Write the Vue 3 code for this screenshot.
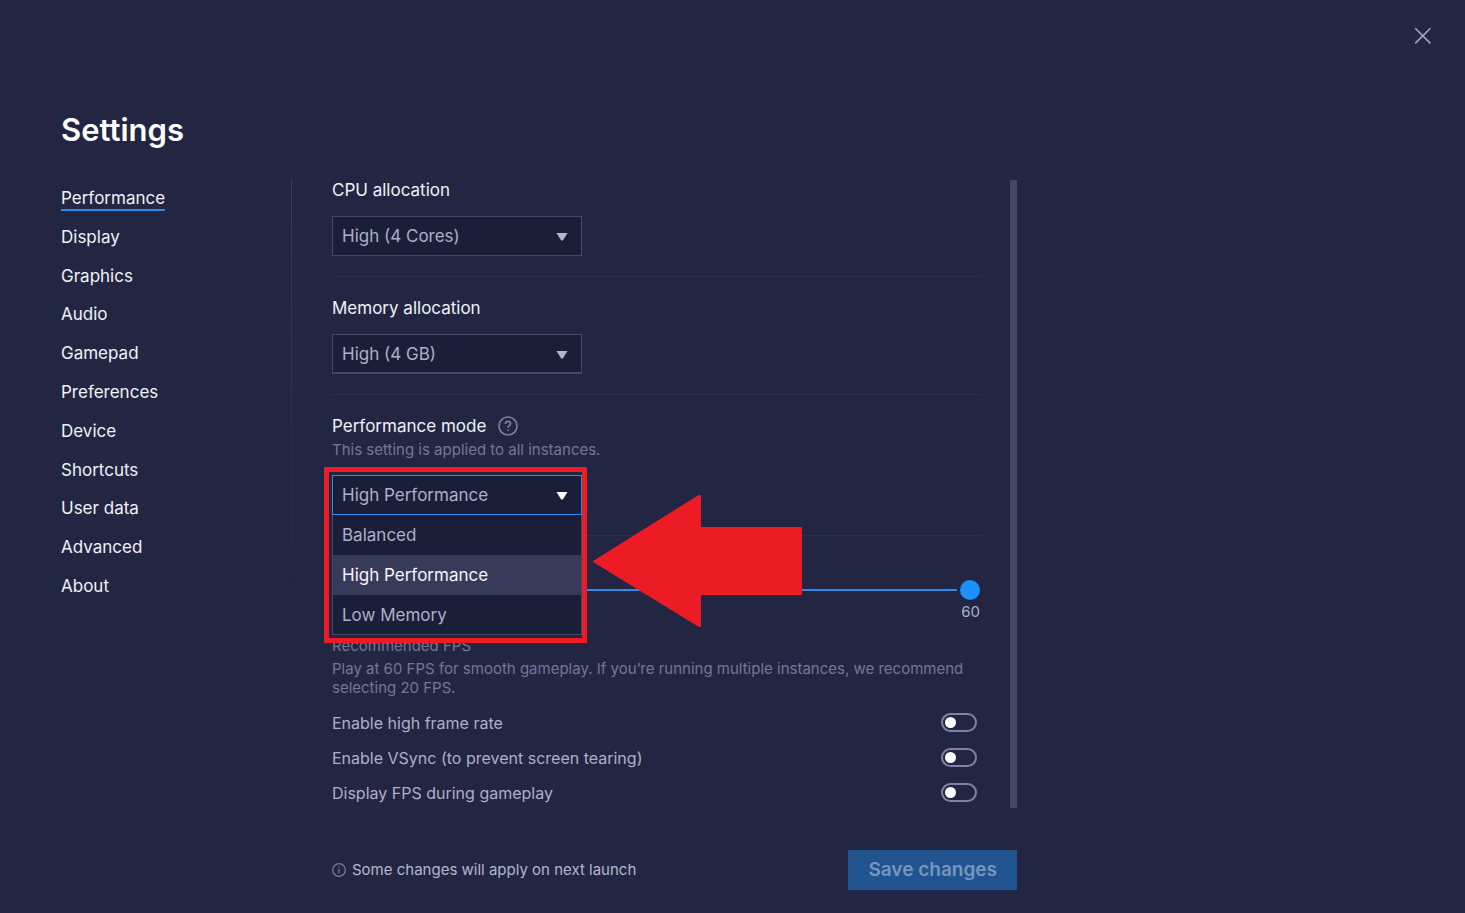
<script setup>
import { ref } from 'vue'

const navItems = [
  'Performance', 'Display', 'Graphics', 'Audio', 'Gamepad', 'Preferences',
  'Device', 'Shortcuts', 'User data', 'Advanced', 'About'
]
const activeNav = ref('Performance')

const cpu = ref('High (4 Cores)')
const memory = ref('High (4 GB)')
const modes = ['Balanced', 'High Performance', 'Low Memory']
const mode = ref('High Performance')
const fps = ref(60)

const toggles = ref([
  { id: 'high-frame-rate', label: 'Enable high frame rate', on: false },
  { id: 'vsync', label: 'Enable VSync (to prevent screen tearing)', on: false },
  { id: 'display-fps', label: 'Display FPS during gameplay', on: false }
])
</script>

<template>
  <div class="window">
    <button class="close" type="button" aria-label="Close">
      <svg width="18" height="18" viewBox="0 0 18 18">
        <path d="M1.2 1.2 16.4 16.4M16.4 1.2 1.2 16.4" />
      </svg>
    </button>

    <h1>Settings</h1>

    <div class="layout">
      <nav class="sidebar">
        <ul>
          <li v-for="item in navItems" :key="item">
            <a href="#" :class="{ active: item === activeNav }" @click.prevent="activeNav = item">{{ item }}</a>
          </li>
        </ul>
      </nav>

      <main class="main">
        <div class="scroller">
          <div class="content">
            <section>
              <label class="heading" for="cpu">CPU allocation</label>
              <div class="dropdown">
                <select id="cpu" v-model="cpu">
                  <option>High (4 Cores)</option>
                </select>
                <svg class="caret" width="12" height="8" viewBox="0 0 12 8"><path d="M.5 0H11.5L6.8 7.6H5.2Z" /></svg>
              </div>
            </section>

            <section>
              <label class="heading" for="memory">Memory allocation</label>
              <div class="dropdown">
                <select id="memory" v-model="memory" class="heavy">
                  <option>High (4 GB)</option>
                </select>
                <svg class="caret" width="12" height="8" viewBox="0 0 12 8"><path d="M.5 0H11.5L6.8 7.6H5.2Z" /></svg>
              </div>
            </section>

            <section>
              <div class="heading-row">
                <label class="heading" for="mode">Performance mode</label>
                <svg class="help" width="20" height="20" viewBox="0 0 20 20">
                  <circle cx="10" cy="10" r="9" />
                  <path d="M7.4 8C7.4 6.4 8.5 5.4 10 5.4S12.6 6.4 12.6 7.8C12.6 9.7 10 9.7 10 11.7" />
                  <path d="M10 13.4V15" />
                </svg>
              </div>
              <p class="hint">This setting is applied to all instances.</p>
              <div class="dropdown open">
                <select id="mode" v-model="mode">
                  <option v-for="m in modes" :key="m">{{ m }}</option>
                </select>
                <svg class="caret" width="12" height="8" viewBox="0 0 12 8"><path d="M.5 0H11.5L6.8 7.6H5.2Z" /></svg>
                <ul class="menu" role="listbox">
                  <li
                    v-for="m in modes"
                    :key="m"
                    role="option"
                    :aria-selected="m === mode"
                    :class="{ selected: m === mode }"
                    @click="mode = m"
                  >{{ m }}</li>
                </ul>
                <div class="highlight"></div>
                <svg class="arrow" width="209" height="134" viewBox="0 0 209 134">
                  <path d="M1 67.5 106 2H107V34H208V100H107V132H106Z" />
                </svg>
              </div>
            </section>

            <section class="frame-rate">
              <input id="fps" v-model="fps" class="slider" type="range" min="1" max="60" />
              <output for="fps">{{ fps }}</output>
              <label class="hint" for="fps">Recommended FPS</label>
              <p class="hint note">Play at 60 FPS for smooth gameplay. If you’re running multiple instances, we recommend selecting 20 FPS.</p>
              <div v-for="t in toggles" :key="t.id" class="toggle-row">
                <label :for="t.id">{{ t.label }}</label>
                <input :id="t.id" v-model="t.on" type="checkbox" />
              </div>
            </section>
          </div>
          <div class="scrollbar"></div>
        </div>

        <footer>
          <p>
            <svg width="14" height="14" viewBox="0 0 14 14">
              <circle cx="7" cy="7" r="6.3" />
              <path d="M7 3.6V4.8M7 6V10.4" />
            </svg>
            Some changes will apply on next launch
          </p>
          <button class="save" type="button">Save changes</button>
        </footer>
      </main>
    </div>
  </div>
</template>

<style>
body {
  background: #232642;
}
</style>

<style scoped>
* {
  box-sizing: border-box;
}
.window {
  position: relative;
  min-height: 100vh;
  padding: 112px 61px 23px;
  background: #232642;
  color: #f0f1f8;
  font-family: Inter, Roboto, "Liberation Sans", sans-serif;
  font-size: 17px;
  line-height: 20px;
}
h1, p, ul {
  margin: 0;
  padding: 0;
}
ul {
  list-style: none;
}
button, select {
  font: inherit;
}
svg {
  display: block;
  flex: none;
}
.close {
  position: absolute;
  top: 27px;
  right: 33px;
  padding: 0;
  border: 0;
  background: none;
  cursor: pointer;
}
.close path {
  fill: none;
  stroke: #a3a5c2;
  stroke-width: 1.6;
}
h1 {
  color: #fff;
  font-size: 31px;
  font-weight: 600;
  line-height: 36px;
}
.layout {
  display: grid;
  grid-template-columns: 231px minmax(0, 725px);
  margin-top: 32px;
}
.sidebar {
  align-self: start;
  padding-top: 8px;
  border-right: 1px solid;
  border-image: linear-gradient(#3a3d5b, #232642) 1;
}
.sidebar ul {
  display: flex;
  flex-direction: column;
  justify-content: space-between;
  height: 411px;
}
.sidebar li {
  display: flex;
}
.sidebar a {
  padding-bottom: 1px;
  border-bottom: 2px solid transparent;
  color: inherit;
  text-decoration: none;
}
.sidebar .active {
  border-color: #338ae6;
}
.main {
  padding-left: 40px;
}
.scroller {
  display: flex;
  gap: 28px;
}
.content {
  flex: 1;
  min-width: 0;
}
.scrollbar {
  width: 7px;
  background: #464765;
}
section {
  padding: 21px 0 20px;
  border-bottom: 1px solid #2c2f4c;
}
section:first-child {
  padding-top: 0;
}
.heading {
  display: block;
}
.heading-row {
  display: flex;
  align-items: center;
  gap: 12px;
}
.help circle, .help path {
  fill: none;
  stroke: #7d7f9d;
  stroke-width: 1.7;
}
.hint {
  color: #74769a;
  font-size: 15px;
  line-height: 19px;
}
.heading-row + .hint {
  margin-top: 4px;
}
.dropdown {
  position: relative;
  width: 250px;
  margin-top: 16px;
}
select {
  display: block;
  width: 100%;
  height: 40px;
  padding: 0 40px 0 9px;
  border: 1px solid #464865;
  border-radius: 0;
  outline: 0;
  appearance: none;
  background: #1b1e38;
  color: #adafc8;
}
.heavy {
  border-bottom-width: 2px;
}
.caret {
  position: absolute;
  top: 17px;
  right: 14px;
  fill: #b3b5d2;
  pointer-events: none;
}
.open select {
  border-color: #338ae6;
}
.open .caret {
  fill: #fff;
}
.menu {
  position: absolute;
  z-index: 1;
  top: 100%;
  left: 0;
  right: 0;
  height: 120px;
  border: 1px solid #464865;
  border-top: 0;
  background: #1b1e38;
  color: #adafc8;
}
.menu li {
  padding: 10px 9px;
  cursor: pointer;
}
.menu .selected {
  background: #383a59;
  color: #f5f5fb;
}
.highlight {
  position: absolute;
  z-index: 2;
  top: -8px;
  right: -5px;
  bottom: -128px;
  left: -8px;
  border: 5px solid #ed1c24;
  pointer-events: none;
}
.arrow {
  position: absolute;
  z-index: 2;
  top: 19px;
  left: 261px;
  fill: #ed1c24;
  stroke: #ed1c24;
  stroke-width: 2;
  stroke-linejoin: round;
  pointer-events: none;
}
.frame-rate {
  display: flex;
  flex-direction: column;
  padding: 44px 2px 0 0;
  border-bottom: 0;
}
.slider {
  appearance: none;
  width: 100%;
  height: 20px;
  margin: 0;
  background: linear-gradient(#338ae6, #338ae6) 0 50% / calc(100% - 23px) 2px no-repeat;
}
.slider::-webkit-slider-thumb {
  appearance: none;
  width: 20px;
  height: 20px;
  border-radius: 50%;
  background: #1a91ff;
}
output {
  align-self: flex-end;
  margin-top: 2px;
  color: #adafc8;
  font-size: 15px;
}
.frame-rate label.hint {
  margin-top: 14px;
}
.note {
  margin: 4px 0 10px;
}
.toggle-row {
  display: flex;
  align-items: center;
  justify-content: space-between;
  height: 31px;
  padding-right: 3px;
  color: #adafc8;
  font-size: 16px;
}
.toggle-row + .toggle-row {
  margin-top: 4px;
}
.toggle-row input {
  appearance: none;
  display: flex;
  align-items: center;
  width: 36px;
  height: 19px;
  margin: 0;
  padding-left: 2px;
  border: 2px solid #8082a3;
  border-radius: 10px;
}
.toggle-row input::before {
  content: "";
  width: 11px;
  height: 11px;
  border-radius: 50%;
  background: #fff;
}
.toggle-row input:checked {
  justify-content: flex-end;
  padding: 0 2px 0 0;
}
footer {
  display: flex;
  align-items: center;
  justify-content: space-between;
  margin-top: 42px;
}
footer p {
  display: flex;
  align-items: center;
  gap: 6px;
  color: #b4b6cd;
  font-size: 15px;
}
footer svg {
  fill: none;
  stroke: #7d7f9d;
  stroke-width: 1.2;
}
.save {
  height: 40px;
  padding: 0 20px;
  border: 0;
  background: #1f5490;
  color: #7896bd;
  font-size: 19px;
  font-weight: 600;
}
</style>
